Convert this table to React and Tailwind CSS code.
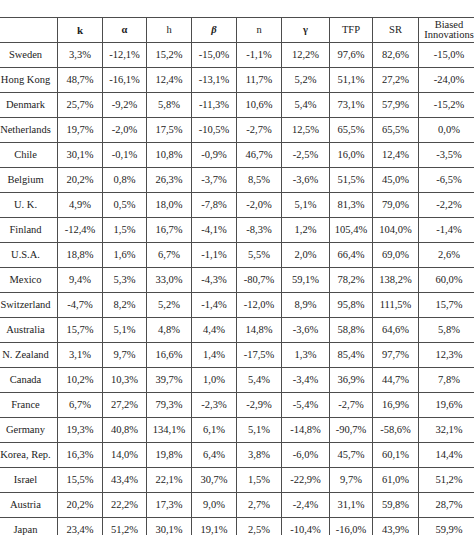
import React from "react";

const rows = [
  ["Sweden", "3,3%", "-12,1%", "15,2%", "-15,0%", "-1,1%", "12,2%", "97,6%", "82,6%", "-15,0%"],
  ["Hong Kong", "48,7%", "-16,1%", "12,4%", "-13,1%", "11,7%", "5,2%", "51,1%", "27,2%", "-24,0%"],
  ["Denmark", "25,7%", "-9,2%", "5,8%", "-11,3%", "10,6%", "5,4%", "73,1%", "57,9%", "-15,2%"],
  ["Netherlands", "19,7%", "-2,0%", "17,5%", "-10,5%", "-2,7%", "12,5%", "65,5%", "65,5%", "0,0%"],
  ["Chile", "30,1%", "-0,1%", "10,8%", "-0,9%", "46,7%", "-2,5%", "16,0%", "12,4%", "-3,5%"],
  ["Belgium", "20,2%", "0,8%", "26,3%", "-3,7%", "8,5%", "-3,6%", "51,5%", "45,0%", "-6,5%"],
  ["U. K.", "4,9%", "0,5%", "18,0%", "-7,8%", "-2,0%", "5,1%", "81,3%", "79,0%", "-2,2%"],
  ["Finland", "-12,4%", "1,5%", "16,7%", "-4,1%", "-8,3%", "1,2%", "105,4%", "104,0%", "-1,4%"],
  ["U.S.A.", "18,8%", "1,6%", "6,7%", "-1,1%", "5,5%", "2,0%", "66,4%", "69,0%", "2,6%"],
  ["Mexico", "9,4%", "5,3%", "33,0%", "-4,3%", "-80,7%", "59,1%", "78,2%", "138,2%", "60,0%"],
  ["Switzerland", "-4,7%", "8,2%", "5,2%", "-1,4%", "-12,0%", "8,9%", "95,8%", "111,5%", "15,7%"],
  ["Australia", "15,7%", "5,1%", "4,8%", "4,4%", "14,8%", "-3,6%", "58,8%", "64,6%", "5,8%"],
  ["N. Zealand", "3,1%", "9,7%", "16,6%", "1,4%", "-17,5%", "1,3%", "85,4%", "97,7%", "12,3%"],
  ["Canada", "10,2%", "10,3%", "39,7%", "1,0%", "5,4%", "-3,4%", "36,9%", "44,7%", "7,8%"],
  ["France", "6,7%", "27,2%", "79,3%", "-2,3%", "-2,9%", "-5,4%", "-2,7%", "16,9%", "19,6%"],
  ["Germany", "19,3%", "40,8%", "134,1%", "6,1%", "5,1%", "-14,8%", "-90,7%", "-58,6%", "32,1%"],
  ["Korea, Rep.", "16,3%", "14,0%", "19,8%", "6,4%", "3,8%", "-6,0%", "45,7%", "60,1%", "14,4%"],
  ["Israel", "15,5%", "43,4%", "22,1%", "30,7%", "1,5%", "-22,9%", "9,7%", "61,0%", "51,2%"],
  ["Austria", "20,2%", "22,2%", "17,3%", "9,0%", "2,7%", "-2,4%", "31,1%", "59,8%", "28,7%"],
  ["Japan", "23,4%", "51,2%", "30,1%", "19,1%", "2,5%", "-10,4%", "-16,0%", "43,9%", "59,9%"],
];

const cell =
  "bg-white h-[24px] flex items-center justify-center whitespace-nowrap";

export default function App() {
  return (
    <div
      className="w-[474px] h-[535px] overflow-hidden bg-white pt-[17px] text-[#222222] text-[10.5px]"
      style={{ fontFamily: '"Liberation Serif", "Times New Roman", serif' }}
    >
      <div className="ml-[-7px] w-[487px] grid grid-cols-[63px_44px_43px_44px_44px_44px_47px_42px_45px_60px] gap-px bg-[#4d4d4d] p-px">
        <div className={cell}></div>
        <div className={cell + " font-bold text-[11px]"}>k</div>
        <div className={cell + " font-bold"}>α</div>
        <div className={cell}>h</div>
        <div className={cell + " font-bold italic"}>β</div>
        <div className={cell}>n</div>
        <div className={cell + " font-bold"}>γ</div>
        <div className={cell}>TFP</div>
        <div className={cell}>SR</div>
        <div className="bg-white h-[24px] flex flex-col items-center justify-center leading-[10px] whitespace-nowrap">
          <span>Biased</span>
          <span>Innovations</span>
        </div>
        {rows.map((r) =>
          r.map((v, i) => (
            <div key={r[0] + i} className={cell}>
              {v}
            </div>
          ))
        )}
      </div>
    </div>
  );
}
